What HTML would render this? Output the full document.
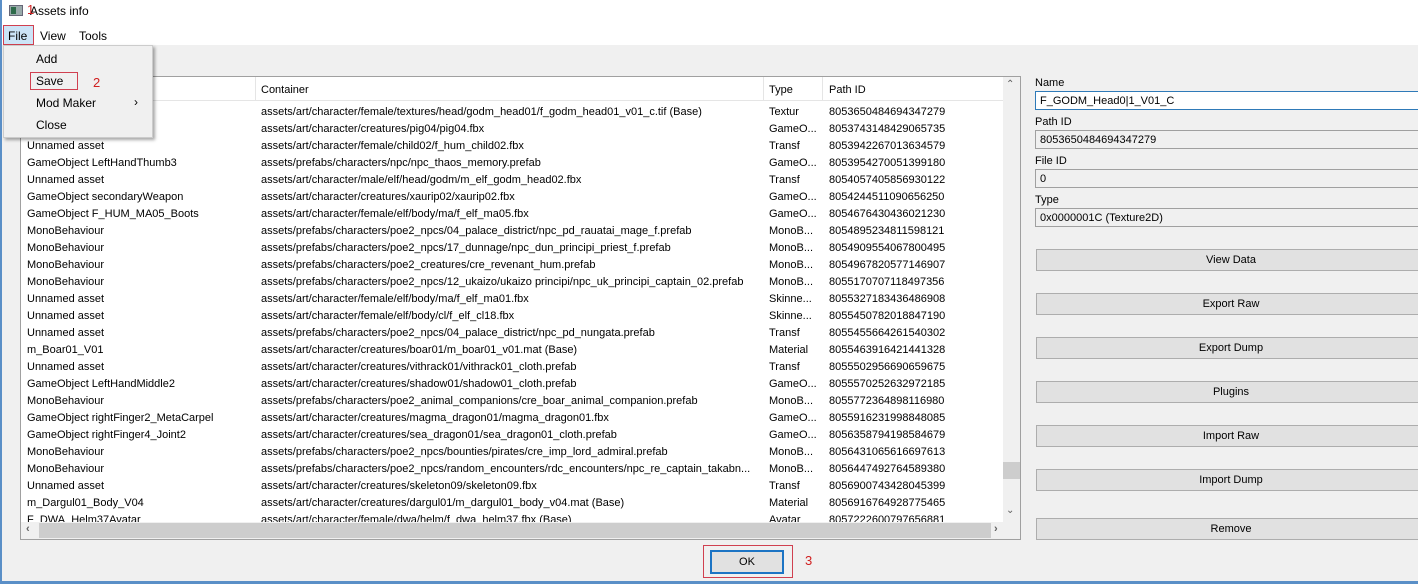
<!DOCTYPE html><html><head><style>
*{margin:0;padding:0;box-sizing:border-box}
body{width:1418px;height:584px;position:relative;overflow:hidden;background:#f0f0f0;font-family:"Liberation Sans",sans-serif;font-size:11px;color:#000}
.a{position:absolute;white-space:nowrap}
.row{position:absolute;left:0;height:17px;line-height:17px;width:1000px}
.row span{position:absolute}
.in{position:absolute;left:1035px;width:390px;height:19px;border:1px solid #a0a0a0;background:#f0f0f0;line-height:18px;padding-left:4px}
.btn{position:absolute;left:1036px;width:390px;height:22px;border:1px solid #adadad;background:#e1e1e1;text-align:center;line-height:21px}
.lbl{position:absolute;left:1035px}
.red{color:#d02020;font-size:13px}
</style></head><body>
<div class="a" style="left:0;top:0;width:1418px;height:45px;background:#fff"></div>
<div class="a" style="left:0;top:0;width:2px;height:584px;background:#5a8fc7"></div>
<div class="a" style="left:0;top:581px;width:1418px;height:3px;background:#5a8fc7"></div>
<div class="a" style="left:9px;top:5px;width:14px;height:11px;background:#9aa;border:1px solid #667"></div>
<div class="a" style="left:11px;top:7px;width:5px;height:7px;background:#2d6a4a"></div>
<div class="a" style="left:30px;top:4px;font-size:12px">Assets info</div>
<div class="a red" style="left:27px;top:2px">1</div>
<div class="a" style="left:3px;top:25px;width:31px;height:20px;background:#cce4f7;border:1px solid #d04050"></div>
<div class="a" style="left:8px;top:29px;font-size:12px">File</div>
<div class="a" style="left:40px;top:29px;font-size:12px">View</div>
<div class="a" style="left:79px;top:29px;font-size:12px">Tools</div>

<div class="a" style="left:20px;top:76px;width:1001px;height:464px;border:1px solid #a0a0a0;background:#fff;overflow:hidden">
 <div class="a" style="left:0;top:0;width:1000px;height:24px;border-bottom:1px solid #e5e5e5"></div>
 <div class="a" style="left:234px;top:0;width:1px;height:24px;background:#e5e5e5"></div>
 <div class="a" style="left:742px;top:0;width:1px;height:24px;background:#e5e5e5"></div>
 <div class="a" style="left:801px;top:0;width:1px;height:24px;background:#e5e5e5"></div>
 <div class="a" style="left:240px;top:7px">Container</div>
 <div class="a" style="left:748px;top:7px">Type</div>
 <div class="a" style="left:808px;top:7px">Path ID</div>
 <div id="rows"></div>
 <div class="a" style="left:982px;top:0;width:17px;height:445px;background:#f0f0f0"></div>
 <div class="a" style="left:985px;top:2px;color:#606060;font-size:10px">&#8963;</div>
 <div class="a" style="left:982px;top:385px;width:17px;height:17px;background:#cdcdcd"></div>
 <div class="a" style="left:985px;top:428px;color:#606060;font-size:10px">&#8964;</div>
 <div class="a" style="left:0;top:445px;width:999px;height:17px;background:#f0f0f0"></div>
 <div class="a" style="left:18px;top:446px;width:952px;height:15px;background:#cdcdcd"></div>
 <div class="a" style="left:5px;top:446px;color:#606060;font-weight:bold">&lsaquo;</div>
 <div class="a" style="left:973px;top:446px;color:#606060;font-weight:bold">&rsaquo;</div>
</div>

<div class="a" style="left:3px;top:45px;width:150px;height:93px;background:#f0f0f0;border:1px solid #ccc;box-shadow:2px 2px 3px rgba(0,0,0,.35)"></div>
<div class="a" style="left:36px;top:52px;font-size:12px">Add</div>
<div class="a" style="left:30px;top:72px;width:48px;height:18px;border:1px solid #d04050"></div>
<div class="a" style="left:36px;top:74px;font-size:12px">Save</div>
<div class="a red" style="left:93px;top:75px">2</div>
<div class="a" style="left:36px;top:96px;font-size:12px">Mod Maker</div>
<div class="a" style="left:134px;top:95px;font-size:12px">&rsaquo;</div>
<div class="a" style="left:36px;top:118px;font-size:12px">Close</div>

<div class="lbl" style="top:77px">Name</div>
<div class="in" style="top:91px;border-color:#2f7ab8;background:#fff">F_GODM_Head0|1_V01_C</div>
<div class="lbl" style="top:116px">Path ID</div>
<div class="in" style="top:130px">8053650484694347279</div>
<div class="lbl" style="top:155px">File ID</div>
<div class="in" style="top:169px">0</div>
<div class="lbl" style="top:194px">Type</div>
<div class="in" style="top:208px">0x0000001C (Texture2D)</div>
<div class="btn" style="top:249px">View Data</div>
<div class="btn" style="top:293px">Export Raw</div>
<div class="btn" style="top:337px">Export Dump</div>
<div class="btn" style="top:381px">Plugins</div>
<div class="btn" style="top:425px">Import Raw</div>
<div class="btn" style="top:469px">Import Dump</div>
<div class="btn" style="top:518px">Remove</div>

<div class="a" style="left:703px;top:545px;width:90px;height:33px;border:1px solid #d04050"></div>
<div class="a" style="left:710px;top:550px;width:74px;height:24px;border:2px solid #1c74c4;background:#e1e1e1;text-align:center;line-height:21px">OK</div>
<div class="a red" style="left:805px;top:553px">3</div>

<script>
var d=[["","assets/art/character/female/textures/head/godm_head01/f_godm_head01_v01_c.tif (Base)","Textur","8053650484694347279"],
["","assets/art/character/creatures/pig04/pig04.fbx","GameO...","8053743148429065735"],
["Unnamed asset","assets/art/character/female/child02/f_hum_child02.fbx","Transf","8053942267013634579"],
["GameObject LeftHandThumb3","assets/prefabs/characters/npc/npc_thaos_memory.prefab","GameO...","8053954270051399180"],
["Unnamed asset","assets/art/character/male/elf/head/godm/m_elf_godm_head02.fbx","Transf","8054057405856930122"],
["GameObject secondaryWeapon","assets/art/character/creatures/xaurip02/xaurip02.fbx","GameO...","8054244511090656250"],
["GameObject F_HUM_MA05_Boots","assets/art/character/female/elf/body/ma/f_elf_ma05.fbx","GameO...","8054676430436021230"],
["MonoBehaviour","assets/prefabs/characters/poe2_npcs/04_palace_district/npc_pd_rauatai_mage_f.prefab","MonoB...","8054895234811598121"],
["MonoBehaviour","assets/prefabs/characters/poe2_npcs/17_dunnage/npc_dun_principi_priest_f.prefab","MonoB...","8054909554067800495"],
["MonoBehaviour","assets/prefabs/characters/poe2_creatures/cre_revenant_hum.prefab","MonoB...","8054967820577146907"],
["MonoBehaviour","assets/prefabs/characters/poe2_npcs/12_ukaizo/ukaizo principi/npc_uk_principi_captain_02.prefab","MonoB...","8055170707118497356"],
["Unnamed asset","assets/art/character/female/elf/body/ma/f_elf_ma01.fbx","Skinne...","8055327183436486908"],
["Unnamed asset","assets/art/character/female/elf/body/cl/f_elf_cl18.fbx","Skinne...","8055450782018847190"],
["Unnamed asset","assets/prefabs/characters/poe2_npcs/04_palace_district/npc_pd_nungata.prefab","Transf","8055455664261540302"],
["m_Boar01_V01","assets/art/character/creatures/boar01/m_boar01_v01.mat (Base)","Material","8055463916421441328"],
["Unnamed asset","assets/art/character/creatures/vithrack01/vithrack01_cloth.prefab","Transf","8055502956690659675"],
["GameObject LeftHandMiddle2","assets/art/character/creatures/shadow01/shadow01_cloth.prefab","GameO...","8055570252632972185"],
["MonoBehaviour","assets/prefabs/characters/poe2_animal_companions/cre_boar_animal_companion.prefab","MonoB...","8055772364898116980"],
["GameObject rightFinger2_MetaCarpel","assets/art/character/creatures/magma_dragon01/magma_dragon01.fbx","GameO...","8055916231998848085"],
["GameObject rightFinger4_Joint2","assets/art/character/creatures/sea_dragon01/sea_dragon01_cloth.prefab","GameO...","8056358794198584679"],
["MonoBehaviour","assets/prefabs/characters/poe2_npcs/bounties/pirates/cre_imp_lord_admiral.prefab","MonoB...","8056431065616697613"],
["MonoBehaviour","assets/prefabs/characters/poe2_npcs/random_encounters/rdc_encounters/npc_re_captain_takabn...","MonoB...","8056447492764589380"],
["Unnamed asset","assets/art/character/creatures/skeleton09/skeleton09.fbx","Transf","8056900743428045399"],
["m_Dargul01_Body_V04","assets/art/character/creatures/dargul01/m_dargul01_body_v04.mat (Base)","Material","8056916764928775465"],
["F_DWA_Helm37Avatar","assets/art/character/female/dwa/helm/f_dwa_helm37.fbx (Base)","Avatar","8057222600797656881"]];
var h="";d.forEach(function(r,i){h+='<div class="row" style="top:'+(27+i*17)+'px"><span style="left:6px">'+r[0]+'</span><span style="left:240px">'+r[1]+'</span><span style="left:748px">'+r[2]+'</span><span style="left:808px">'+r[3]+'</span></div>'});
document.getElementById("rows").innerHTML=h;
</script>
</body></html>
